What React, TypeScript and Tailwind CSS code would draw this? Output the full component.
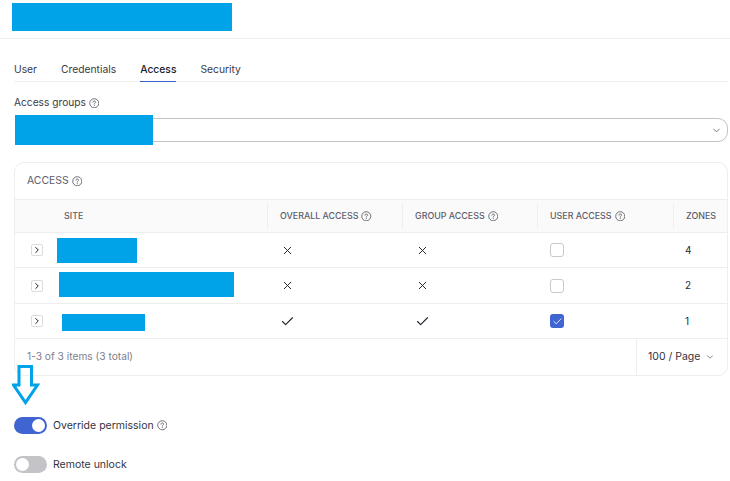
import React from 'react';
import { ChevronDown, ChevronRight, Check, X } from 'lucide-react';

const GRID = 'grid grid-cols-[252px_135px_135px_136px_1fr]';

const rows = [
  { overall: false, group: false, user: false, zones: 4, h: 'h-[35px]', bar: 'ml-[14px] mt-[5px] mb-[4px] h-[25px] w-[80px]' },
  { overall: false, group: false, user: false, zones: 2, h: 'h-[36px]', bar: 'ml-[16px] mt-[4px] mb-[6px] h-[25px] w-[175px]' },
  { overall: true, group: true, user: true, zones: 1, h: 'h-[35px]', bar: 'ml-[19px] mt-[10px] mb-[7px] h-[17px] w-[83px]' },
];

const Help = () => (
  <svg width="10.5" height="10.5" viewBox="0 0 12 12" fill="none" className="shrink-0 text-[#5f5f6c]">
    <circle cx="6" cy="6" r="5.2" stroke="currentColor" strokeWidth="1" />
    <path d="M4.5 4.8c0-.9.7-1.4 1.5-1.4s1.5.5 1.5 1.3c0 1.1-1.5 1.1-1.5 2.3" stroke="currentColor" strokeWidth="1" strokeLinecap="round" />
    <circle cx="6" cy="8.7" r="0.6" fill="currentColor" />
  </svg>
);

const Mark = ({ ok }: { ok: boolean }) =>
  ok ? (
    <Check size={15} strokeWidth={1.8} className="text-[#23232f]" />
  ) : (
    <X size={13} strokeWidth={1.8} className="ml-[1px] text-[#23232f]" />
  );

const HeadCell = ({ label, help }: { label: string; help?: boolean }) => (
  <div className="flex h-full items-center">
    <div className="flex h-[24px] w-full items-center gap-[3px] border-l border-[#eeeeef] pl-[12px]">
      <span>{label}</span>
      {help && <Help />}
    </div>
  </div>
);

const Toggle = ({ on, label, help }: { on: boolean; label: string; help?: boolean }) => (
  <div className="flex items-center">
    <div className={`flex h-[17px] w-[33px] items-center rounded-full p-[2px] ${on ? 'justify-end bg-[#4065d2]' : 'justify-start bg-[#c4c4c8]'}`}>
      <div className="h-[13px] w-[13px] rounded-full bg-white" />
    </div>
    <span className="ml-[6px] mr-[3px] text-[10.5px] text-[#33333f]">{label}</span>
    {help && <Help />}
  </div>
);

export default function App() {
  return (
    <div className="relative h-[481px] w-[730px] overflow-hidden bg-white font-['Inter',sans-serif] text-[#2b2b38]">
      {/* Page title (redacted) */}
      <div className="h-[39px] border-b border-[#eeeeef] pl-[12px] pt-[3px]">
        <div className="h-[28px] w-[220px] bg-[#00a2e8]" />
      </div>

      <div className="pl-[14px] pr-[2px]">
        {/* Tabs */}
        <div className="mt-[20px] flex h-[23px] gap-[24px] border-b border-[#eeeeef] text-[10.3px] text-[#3a3a46]">
          <span className="leading-[21px]">User</span>
          <span className="leading-[21px]">Credentials</span>
          <span className="h-[23px] border-b border-[#3f5fc8] font-medium leading-[21px] text-[#20202c]">Access</span>
          <span className="leading-[21px]">Security</span>
        </div>

        {/* Access groups */}
        <div className="mt-[14px] flex h-[14px] items-center gap-[3px] text-[10.2px] text-[#3a3a46]">
          <span>Access groups</span>
          <Help />
        </div>
        <div className="relative ml-[1px] mt-[8px] flex h-[24px] items-center justify-end rounded-[10px] border border-[#c3c3c8] pr-[5px]">
          <ChevronDown size={11} className="text-[#70707c]" />
          <div className="absolute left-[-1px] top-[-4px] h-[30px] w-[138px] bg-[#00a2e8]" />
        </div>

        {/* Access table */}
        <div className="mt-[20px] overflow-hidden rounded-[10px] border border-[#eeeeef]">
          <div className="flex h-[36px] items-center gap-[3px] pl-[12px] text-[10.4px] text-[#5c5c6c]">
            <span>ACCESS</span>
            <Help />
          </div>
          <div className={`${GRID} h-[34px] items-center border-y border-[#eeeeef] bg-[#fafafa] text-[8.9px] font-medium text-[#5c5c6c]`}>
            <div className="pl-[49px]">SITE</div>
            <HeadCell label="OVERALL ACCESS" help />
            <HeadCell label="GROUP ACCESS" help />
            <HeadCell label="USER ACCESS" help />
            <HeadCell label="ZONES" />
          </div>
          {rows.map((row) => (
            <div key={row.zones} className={`${GRID} ${row.h} items-center border-b border-[#eeeeef] text-[10px]`}>
              <div className="flex items-center pl-[16px]">
                <div className="flex h-[12px] w-[12px] shrink-0 items-center justify-center rounded-[2px] border border-[#dcdce0]">
                  <ChevronRight size={10} strokeWidth={2.4} className="text-[#1c1c28]" />
                </div>
                <div className={`shrink-0 bg-[#00a2e8] ${row.bar}`} />
              </div>
              <div className="pl-[13px]"><Mark ok={row.overall} /></div>
              <div className="pl-[13px]"><Mark ok={row.group} /></div>
              <div className="pl-[13px]">
                {row.user ? (
                  <div className="flex h-[14px] w-[14px] items-center justify-center rounded-[3px] bg-[#4065d2]">
                    <Check size={11} strokeWidth={1.8} className="text-white" />
                  </div>
                ) : (
                  <div className="h-[14px] w-[14px] rounded-[3px] border border-[#c9c9cd]" />
                )}
              </div>
              <div className="pl-[12px] text-[#2b2b38]">{row.zones}</div>
            </div>
          ))}
          <div className="flex h-[36px] items-center justify-between">
            <span className="pl-[12px] text-[10.2px] text-[#80808a]">1-3 of 3 items (3 total)</span>
            <div className="flex h-full w-[91px] items-center gap-[5px] border-l border-[#eeeeef] pl-[11px] text-[10.5px] text-[#33333f]">
              <span>100 / Page</span>
              <ChevronDown size={10} className="text-[#70707c]" />
            </div>
          </div>
        </div>

        {/* Switches */}
        <div className="mt-[41px] flex flex-col gap-[22px]">
          <Toggle on label="Override permission" help />
          <Toggle on={false} label="Remote unlock" />
        </div>
      </div>

      {/* Annotation arrow drawn over the screenshot */}
      <svg width="28" height="42" viewBox="0 0 28 42" fill="none" className="absolute left-[12px] top-[364px]">
        <path d="M7 2.5h12.5V21h6L13.5 38.5 1.5 21H7z" stroke="#00a2e8" strokeWidth="3" />
      </svg>
    </div>
  );
}
